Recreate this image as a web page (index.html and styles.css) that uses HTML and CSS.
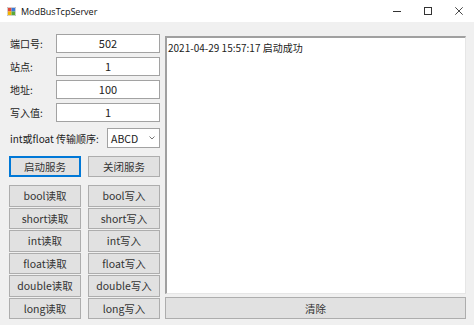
FILE: index.html
```html
<!DOCTYPE html>
<html>
<head>
<meta charset="utf-8">
<link rel="stylesheet" href="styles.css">
</head>
<body>
<div class="window">
  <div class="titlebar">
    <svg class="appicon" width="9" height="9" viewBox="0 0 10 10">
      <rect x="0" y="0" width="10" height="10" fill="#f4f4f4" stroke="#8a8a8a" stroke-width="0.6"/>
      <rect x="1" y="1" width="4" height="4" fill="#e04a3a"/>
      <rect x="5" y="1" width="4" height="4" fill="#3a78d8"/>
      <rect x="1" y="5" width="4" height="4" fill="#f2b400"/>
      <rect x="5" y="5" width="4" height="4" fill="#5aa83a"/>
    </svg>
    <span class="title">ModBusTcpServer</span>
    <div class="controls">
      <span class="ctl"><svg width="8" height="8" viewBox="0 0 8 8"><line x1="0" y1="4.5" x2="8" y2="4.5" stroke="#333" stroke-width="1"/></svg></span>
      <span class="ctl"><svg width="8" height="8" viewBox="0 0 8 8"><rect x="0.5" y="0.5" width="7" height="7" fill="none" stroke="#333" stroke-width="1"/></svg></span>
      <span class="ctl"><svg width="8" height="8" viewBox="0 0 8 8"><path d="M0.3 0.3 L7.7 7.7 M7.7 0.3 L0.3 7.7" stroke="#333" stroke-width="0.9"/></svg></span>
    </div>
  </div>
  <div class="client">
    <div class="left">
      <div class="fields">
        <label class="lbl">端口号:</label><div class="tb">502</div>
        <label class="lbl">站点:</label><div class="tb">1</div>
        <label class="lbl">地址:</label><div class="tb">100</div>
        <label class="lbl">写入值:</label><div class="tb">1</div>
      </div>
      <div class="order">
        <span class="lbl">int或float 传输顺序:</span>
        <div class="combo"><span>ABCD</span><svg width="6" height="4" viewBox="0 0 6 4"><path d="M0.5 0.5 L3 3 L5.5 0.5" fill="none" stroke="#666" stroke-width="0.9"/></svg></div>
      </div>
      <div class="svc">
        <div class="btn focus">启动服务</div>
        <div class="btn">关闭服务</div>
      </div>
      <div class="ops">
        <div class="btn">bool读取</div><div class="btn">bool写入</div>
        <div class="btn">short读取</div><div class="btn">short写入</div>
        <div class="btn">int读取</div><div class="btn">int写入</div>
        <div class="btn">float读取</div><div class="btn">float写入</div>
        <div class="btn">double读取</div><div class="btn">double写入</div>
        <div class="btn">long读取</div><div class="btn">long写入</div>
      </div>
    </div>
    <div class="right">
      <div class="log">2021-04-29 15:57:17 启动成功</div>
      <div class="btn clear">清除</div>
    </div>
  </div>
</div>
</body>
</html>
```
FILE: styles.css
```css
html, body {
  margin: 0;
  padding: 0;
}
body {
  width: 474px;
  height: 325px;
  overflow: hidden;
  background: #f0f0f0;
  font-family: "Noto Sans CJK SC", "Noto Sans", sans-serif;
  font-size: 10px;
  color: #222;
}
.window {
  width: 474px;
  height: 325px;
  display: flex;
  flex-direction: column;
}
.titlebar {
  height: 22px;
  background: #ffffff;
  display: flex;
  align-items: center;
  box-sizing: border-box;
  padding-left: 7px;
}
.appicon {
  margin-top: 1px;
}
.title {
  margin-left: 5px;
  font-family: "Open Sans", "Noto Sans", sans-serif;
  font-size: 9px;
  color: #111;
}
.controls {
  margin-left: auto;
  display: flex;
  height: 22px;
}
.ctl {
  width: 31px;
  display: flex;
  align-items: center;
  justify-content: center;
}
.ctl svg { display: block; }
.client {
  flex: 1;
  display: flex;
  gap: 5px;
  padding: 12px 0 0 9px;
}
.left {
  width: 151px;
  display: flex;
  flex-direction: column;
}
.fields {
  display: grid;
  grid-template-columns: 47px 104px;
  grid-auto-rows: 19px;
  row-gap: 4px;
  align-items: center;
}
.lbl {
  padding-left: 1px;
  white-space: nowrap;
  line-height: 19px;
}
.tb {
  box-sizing: border-box;
  height: 19px;
  background: #fff;
  border: 1px solid #a2a2a2;
  text-align: center;
  line-height: 17px;
  font-size: 11px;
}
.order {
  margin-top: 6px;
  display: flex;
  align-items: center;
  justify-content: space-between;
  height: 20px;
}
.combo {
  box-sizing: border-box;
  width: 53px;
  height: 20px;
  background: #fff;
  border: 1px solid #a2a2a2;
  display: flex;
  align-items: center;
  justify-content: space-between;
  padding: 0 4px 0 3px;
  font-size: 10.5px;
}
.svc {
  margin-top: 8px;
  display: flex;
  justify-content: space-between;
}
.svc .btn {
  width: 72px;
  height: 21px;
}
.btn {
  box-sizing: border-box;
  background: #e1e1e1;
  border: 1px solid #adadad;
  display: flex;
  align-items: center;
  justify-content: center;
  white-space: nowrap;
  font-size: 10.5px;
  color: #333;
}
.btn.focus {
  border: 2px solid #0078d7;
}
.ops {
  margin-top: 8px;
  display: grid;
  grid-template-columns: 72px 72px;
  column-gap: 7px;
  grid-auto-rows: 21.5px;
  row-gap: 1px;
}
.right {
  width: 301px;
  display: flex;
  flex-direction: column;
  padding-top: 2px;
}
.log {
  box-sizing: border-box;
  height: 258px;
  background: #fff;
  border-top: 2px solid #a0a0a0;
  border-left: 2px solid #a0a0a0;
  border-right: 1px solid #e6e6e6;
  border-bottom: 1px solid #e6e6e6;
  padding: 2px 1px;
  line-height: 16px;
  font-size: 10px;
}
.clear {
  margin-top: 3px;
  height: 22px;
}
```
